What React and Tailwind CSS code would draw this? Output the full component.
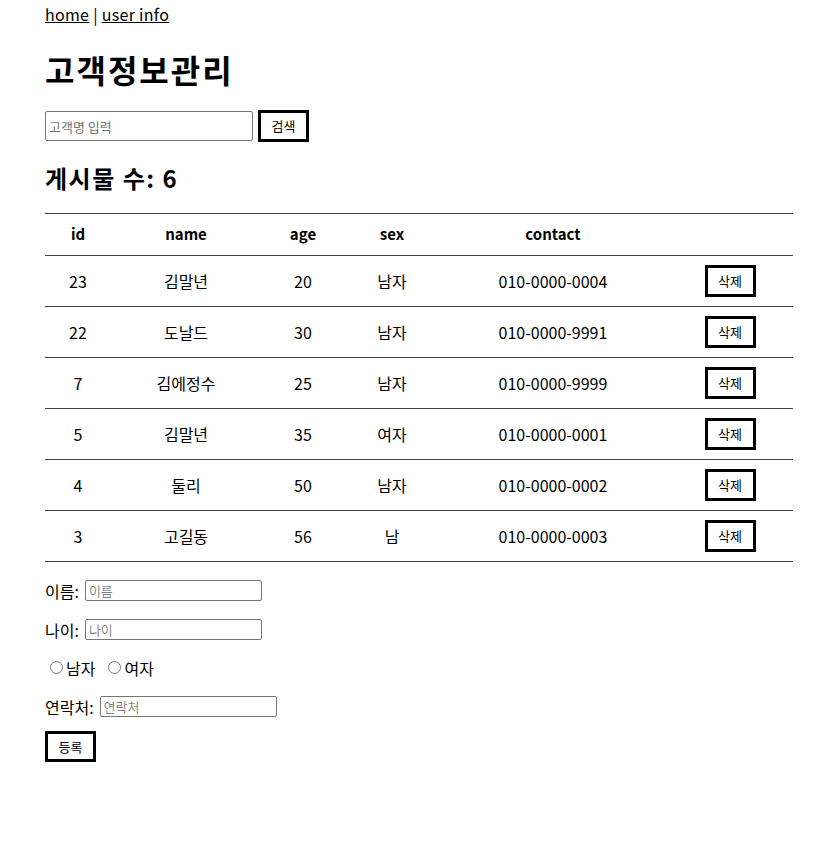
import React, { useState } from 'react'

const font = { fontFamily: '"Noto Sans CJK KR", "Noto Sans", sans-serif' }

const initialUsers = [
  { id: 23, name: '김말년', age: 20, sex: '남자', contact: '010-0000-0004' },
  { id: 22, name: '도날드', age: 30, sex: '남자', contact: '010-0000-9991' },
  { id: 7, name: '김에정수', age: 25, sex: '남자', contact: '010-0000-9999' },
  { id: 5, name: '김말년', age: 35, sex: '여자', contact: '010-0000-0001' },
  { id: 4, name: '둘리', age: 50, sex: '남자', contact: '010-0000-0002' },
  { id: 3, name: '고길동', age: 56, sex: '남', contact: '010-0000-0003' },
]

const cols = 'grid grid-cols-[66px_150px_84px_94px_228px_126px] items-center text-center'

const App = () => {
  const [users, setUsers] = useState(initialUsers)

  return (
    <div className="min-h-[852px] bg-white text-black text-base" style={font}>
      <div className="w-[748px] ml-[45px] pt-[3px]">
        {/* nav */}
        <div className="leading-[23px] tracking-[0.3px]">
          <a href="#" className="underline">home</a> | <a href="#" className="underline">user info</a>
        </div>

        <h1 className="text-[32px] font-bold leading-[46px] mt-[20px] tracking-[2px]">고객정보관리</h1>

        {/* search */}
        <div className="flex items-center gap-[5px] mt-[18px]">
          <input
            placeholder="고객명 입력"
            className="w-[208px] h-[30px] border border-[#767676] rounded-[2px] px-[3px] text-[13px] placeholder:text-[#757575]"
          />
          <button className="w-[51px] h-[32px] border-[3px] border-black text-[13px]">검색</button>
        </div>

        <h2 className="text-[24px] font-bold leading-[34px] mt-[19px] tracking-[1.5px]">게시물 수: {users.length}</h2>

        {/* table */}
        <div className="mt-[18px] border-t border-[#444]">
          <div className={`${cols} h-[42px] font-bold text-[15px] border-b border-[#444]`}>
            <div>id</div>
            <div>name</div>
            <div>age</div>
            <div>sex</div>
            <div>contact</div>
            <div></div>
          </div>
          {users.map((u) => (
            <div key={u.id} className={`${cols} h-[51px] text-[16px] border-b border-[#444]`}>
              <div>{u.id}</div>
              <div>{u.name}</div>
              <div>{u.age}</div>
              <div>{u.sex}</div>
              <div>{u.contact}</div>
              <div className="flex justify-center">
                <button
                  onClick={() => setUsers(users.filter((x) => x.id !== u.id))}
                  className="w-[51px] h-[32px] border-[3px] border-black text-[13px]"
                >
                  삭제
                </button>
              </div>
            </div>
          ))}
        </div>

        {/* form */}
        <div className="mt-[17px] flex flex-col gap-[16px]">
          <div className="flex items-center gap-[6px] h-[23px]">
            <span>이름:</span>
            <input placeholder="이름" className="w-[177px] h-[21px] border border-[#767676] rounded-[2px] px-[3px] text-[13px]" />
          </div>
          <div className="flex items-center gap-[6px] h-[23px]">
            <span>나이:</span>
            <input placeholder="나이" className="w-[177px] h-[21px] border border-[#767676] rounded-[2px] px-[3px] text-[13px]" />
          </div>
          <div className="flex items-center h-[23px] -mt-[1px]">
            <label className="flex items-center">
              <input type="radio" name="sex" className="ml-[5px] mr-[3px] w-[13px] h-[13px]" />
              남자
            </label>
            <label className="flex items-center ml-[8px]">
              <input type="radio" name="sex" className="ml-[5px] mr-[3px] w-[13px] h-[13px]" />
              여자
            </label>
          </div>
          <div className="flex items-center gap-[6px] h-[23px]">
            <span>연락처:</span>
            <input placeholder="연락처" className="w-[177px] h-[21px] border border-[#767676] rounded-[2px] px-[3px] text-[13px]" />
          </div>
          <div className="-mt-[3px]">
            <button className="w-[51px] h-[31px] border-[3px] border-black text-[13px]">등록</button>
          </div>
        </div>
      </div>
    </div>
  )
}

export default App
